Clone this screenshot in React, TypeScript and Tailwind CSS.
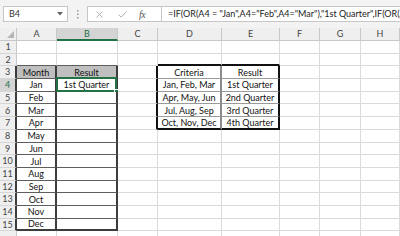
import React from 'react';

const COLS = ['A', 'B', 'C', 'D', 'E', 'F', 'G', 'H'];

// cell text, keyed by "row-col" (col 1 = A)
const DATA: Record<string, string> = {
  '3-1': 'Month',
  '3-2': 'Result',
  '4-1': 'Jan',
  '4-2': '1st Quarter',
  '5-1': 'Feb',
  '6-1': 'Mar',
  '7-1': 'Apr',
  '8-1': 'May',
  '9-1': 'Jun',
  '10-1': 'Jul',
  '11-1': 'Aug',
  '12-1': 'Sep',
  '13-1': 'Oct',
  '14-1': 'Nov',
  '15-1': 'Dec',
  '3-4': 'Criteria',
  '3-5': 'Result',
  '4-4': 'Jan, Feb, Mar',
  '5-4': 'Apr, May, Jun',
  '6-4': 'Jul, Aug, Sep',
  '7-4': 'Oct, Nov, Dec',
  '4-5': '1st Quarter',
  '5-5': '2nd Quarter',
  '6-5': '3rd Quarter',
  '7-5': '4th Quarter',
};

const R_GRID = 'border-r border-r-[#dadada]';
const R_T1 = 'border-r-2 border-r-[#3c3c3c]';
const R_T2 = 'border-r-2 border-r-[#111111]';
const R_T2IN = 'border-r-2 border-r-[#8c8c8c]';
const B_GRID = 'border-b border-b-[#dadada]';
const B_T1IN = 'border-b border-b-[#5e5e5e]';
const B_T1OUT = 'border-b-2 border-b-[#3c3c3c]';
const B_T2OUT = 'border-b-2 border-b-[#111111]';
const B_T2IN = 'border-b border-b-[#9a9a9a]';

function rightCls(r: number, c: number) {
  if (r >= 3 && r <= 15 && (c === 1 || c === 2)) return R_T1;
  if (r >= 3 && r <= 7 && (c === 3 || c === 5)) return R_T2;
  if (r >= 3 && r <= 7 && c === 4) return R_T2IN;
  return R_GRID;
}

function bottomCls(r: number, c: number) {
  if (c === 1 || c === 2) {
    if (r >= 2 && r <= 14) return B_T1IN;
    if (r === 15) return B_T1OUT;
  }
  if (c === 4 || c === 5) {
    if (r === 2 || r === 7) return B_T2OUT;
    if (r >= 3 && r <= 6) return B_T2IN;
  }
  return B_GRID;
}

function Cell({ r, c }: { r: number; c: number }) {
  const text = DATA[`${r}-${c}`];
  const isHead = r === 3 && (c === 1 || c === 2);
  const selected = r === 4 && c === 2;
  return (
    <div
      className={`relative h-[12.7px] flex items-center justify-center whitespace-nowrap ${rightCls(r, c)} ${bottomCls(r, c)} ${isHead ? 'bg-[#bfbfbf]' : 'bg-white'}`}
    >
      {text && <span className="leading-none text-[#111]">{text}</span>}
      {selected && (
        <>
          <div className="absolute -left-px -top-[2px] -right-[1px] -bottom-[1px] border-2 border-[#217346]" />
          <div className="absolute -right-[3px] -bottom-[3px] w-[5px] h-[5px] bg-[#217346] border border-white" />
        </>
      )}
    </div>
  );
}

export default function App() {
  const rows = Array.from({ length: 15 }, (_, i) => i + 1);

  return (
    <div className="w-[400px] h-[236px] overflow-hidden bg-white font-['Lato',_'Liberation_Sans',_sans-serif] text-[9px]">
      {/* formula bar */}
      <div className="h-[28px] bg-[#f3f3f3] flex items-center">
        <div className="ml-[3px] w-[65px] h-[16px] bg-white border border-[#c6c6c6] flex items-center justify-between pl-[5px] pr-[4px] text-[#333]">
          <span>B4</span>
          <svg width="6" height="4" viewBox="0 0 6 4">
            <path d="M0 0 L6 0 L3 3.5 Z" fill="#666" />
          </svg>
        </div>
        <div className="w-[19px] flex justify-center">
          <svg width="2" height="9" viewBox="0 0 2 9">
            <rect x="0" y="0" width="1.5" height="1.5" fill="#9a9a9a" />
            <rect x="0" y="3.5" width="1.5" height="1.5" fill="#9a9a9a" />
            <rect x="0" y="7" width="1.5" height="1.5" fill="#9a9a9a" />
          </svg>
        </div>
        <div className="w-[74px] h-[16px] bg-white border border-[#c6c6c6] border-r-0 flex items-center">
          <svg className="ml-[8px]" width="7" height="7" viewBox="0 0 7 7">
            <path d="M0.5 0.5 L6.5 6.5 M6.5 0.5 L0.5 6.5" stroke="#b0b0b0" strokeWidth="1" />
          </svg>
          <svg className="ml-[15px]" width="9" height="7" viewBox="0 0 9 7">
            <path d="M0.5 3.5 L3.2 6.2 L8.5 0.5" stroke="#b0b0b0" strokeWidth="1" fill="none" />
          </svg>
          <span className="ml-[12px] font-['Liberation_Serif',_serif] italic text-[10px] text-[#555] tracking-[-0.5px]">fx</span>
        </div>
        <div className="flex-1 h-[16px] bg-white border border-[#c6c6c6] border-r-0 flex items-center pl-[6px] overflow-hidden whitespace-nowrap text-[#222]">
          =IF(OR(A4 = "Jan",A4="Feb",A4="Mar"),"1st Quarter",IF(OR(A4="Apr",A4="May",A4="Jun"),"2nd Quarter")
        </div>
      </div>

      {/* sheet grid */}
      <div className="grid grid-cols-[17px_40px_61px_40px_64px_58px_40px_41px_1fr]">
        {/* column headers */}
        <div className="relative h-[13px] bg-[#efefef] border-r border-b border-[#c8c8c8]">
          <svg className="absolute right-[2px] bottom-[2px]" width="7" height="7" viewBox="0 0 7 7">
            <path d="M7 0 L7 7 L0 7 Z" fill="#b5b5b5" />
          </svg>
        </div>
        {COLS.map((col) =>
          col === 'B' ? (
            <div
              key={col}
              className="h-[13px] flex items-center justify-center bg-[#d4d4d4] border-r border-r-[#c8c8c8] border-b-2 border-b-[#217346] text-[#217346]"
            >
              {col}
            </div>
          ) : (
            <div
              key={col}
              className="h-[13px] flex items-center justify-center bg-[#efefef] border-r border-b border-[#c8c8c8] text-[#444]"
            >
              {col}
            </div>
          ),
        )}

        {/* rows */}
        {rows.map((r) => (
          <React.Fragment key={r}>
            <div
              className={`h-[12.7px] flex items-center justify-center border-b border-b-[#d6d6d6] ${
                r === 4 ? 'bg-[#d4d4d4] text-[#217346]' : 'bg-[#efefef] text-[#444]'
              } ${r >= 3 && r <= 15 ? 'border-r-2 border-r-[#3c3c3c]' : 'border-r border-r-[#c8c8c8]'}`}
            >
              {r}
            </div>
            {COLS.map((_, i) => (
              <Cell key={i} r={r} c={i + 1} />
            ))}
          </React.Fragment>
        ))}
        {/* partly visible row 16 */}
        <div className="h-[6px] bg-[#efefef] border-r border-r-[#c8c8c8]" />
        {COLS.map((col) => (
          <div key={col} className="h-[6px] border-r border-r-[#dadada]" />
        ))}
      </div>
    </div>
  );
}
